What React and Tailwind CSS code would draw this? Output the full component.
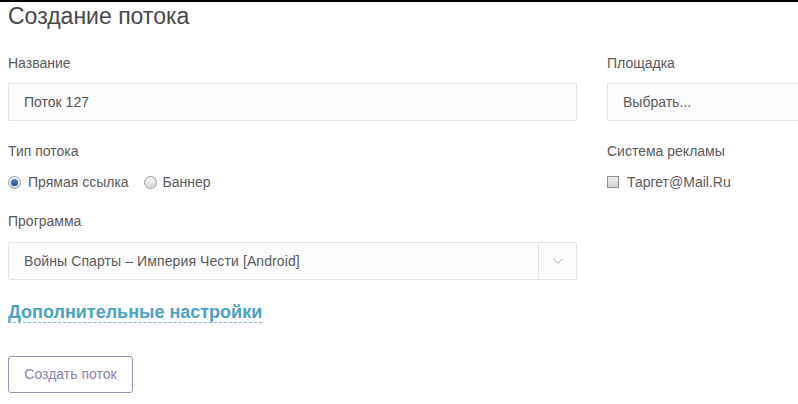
import React from "react";

function Radio({ checked }) {
  return (
    <span className="relative inline-flex h-[13px] w-[13px] items-center justify-center rounded-full border border-[#9a9a9a] bg-gradient-to-b from-[#f4f4f4] to-[#d8d8d8]">
      {checked && <span className="h-[7px] w-[7px] rounded-full bg-gradient-to-b from-[#4d86bf] to-[#1f4f82]" />}
    </span>
  );
}

export default function App() {
  return (
    <div
      className="h-[404px] w-[798px] overflow-hidden border-t-2 border-black bg-white text-[14px] text-[#5a5a5a]"
      style={{ fontFamily: '"Liberation Sans", Arial, sans-serif' }}
    >
      <h1 className="pl-2 text-[23px] leading-[28px] text-[#484848]">Создание потока</h1>
      <div className="grid grid-cols-[569px_240px] gap-x-[30px] pl-2">
        {/* Left column */}
        <div className="flex flex-col">
          <div className="mt-[23px] leading-[20px]">Название</div>
          <div className="mt-[10px] flex h-[38px] items-center rounded-[2px] border border-[#e2e2e2] bg-[#fcfcfc] px-[15px] text-[#555]">
            Поток 127
          </div>
          <div className="mt-[20px] leading-[20px]">Тип потока</div>
          <div className="mt-[11px] flex h-[20px] items-center">
            <Radio checked />
            <span className="ml-[7px]">Прямая ссылка</span>
            <span className="ml-[15px] flex items-center">
              <Radio />
              <span className="ml-[6px]">Баннер</span>
            </span>
          </div>
          <div className="mt-[19px] leading-[20px]">Программа</div>
          <div className="mt-[11px] flex h-[38px] items-stretch rounded-[2px] border border-[#e2e2e2] bg-[#fcfcfc]">
            <div className="flex flex-1 items-center px-[15px] tracking-[0.1px]">Войны Спарты – Империя Чести [Android]</div>
            <div className="flex w-[38px] items-center justify-center border-l border-[#e2e2e2]">
              <svg width="12" height="8" viewBox="0 0 12 8" fill="none">
                <path d="M1 1.5L6 6L11 1.5" stroke="#cfcfcf" strokeWidth="1.2" />
              </svg>
            </div>
          </div>
          <div className="mt-[22px] flex">
            <span className="border-b border-dashed border-[#7fb9d1] text-[18px] font-bold leading-[20px] text-[#4aa2c2]">
              Дополнительные настройки
            </span>
          </div>
          <div className="mt-[33px] flex">
            <button className="h-[37px] w-[125px] rounded-[3px] border border-[#9b93b4] bg-white text-[14px] text-[#8a82a6]">
              Создать поток
            </button>
          </div>
        </div>
        {/* Right column */}
        <div className="flex flex-col">
          <div className="mt-[23px] leading-[20px]">Площадка</div>
          <div className="mt-[10px] flex h-[38px] w-[260px] items-center rounded-[2px] border border-[#e2e2e2] bg-[#fcfcfc] px-[15px]">
            Выбрать...
          </div>
          <div className="mt-[20px] leading-[20px]">Система рекламы</div>
          <div className="mt-[11px] flex h-[20px] items-center">
            <span className="h-[12px] w-[12px] border border-[#8e8e8e] bg-gradient-to-b from-[#eeeeee] to-[#d4d4d4]" />
            <span className="ml-[8px]">Таргет@Mail.Ru</span>
          </div>
        </div>
      </div>
    </div>
  );
}
